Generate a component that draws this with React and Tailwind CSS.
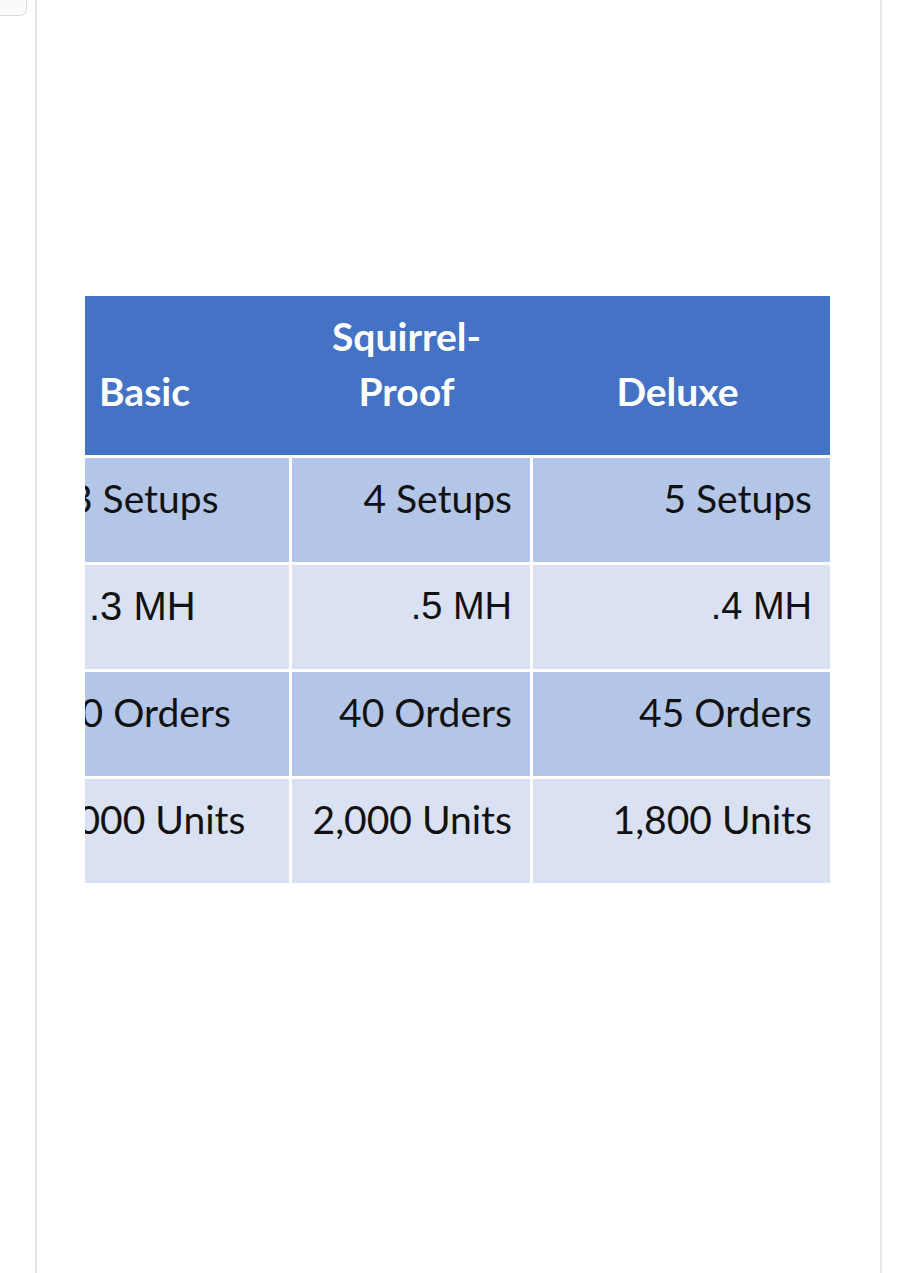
import React from "react";

const lato = { fontFamily: "Lato, 'Open Sans', sans-serif" };
const arial = { fontFamily: "'Liberation Sans', Arial, sans-serif" };

export default function App() {
  const rows = [
    { bg: "bg-[#b4c6e7]", c1: "3 Setups", c1cls: "ml-[-15px]", c2: "4 Setups", c3: "5 Setups", arial: false },
    { bg: "bg-[#d9e1f2]", c1: ".3 MH", c1cls: "ml-[4px] text-[40px]", c2: ".5 MH", c3: ".4 MH", arial: true },
    { bg: "bg-[#b4c6e7]", c1: "30 Orders", c1cls: "ml-[-27px]", c2: "40 Orders", c3: "45 Orders", arial: false },
    { bg: "bg-[#d9e1f2]", c1: "2,000 Units", c1cls: "ml-[-39px]", c2: "2,000 Units", c3: "1,800 Units", arial: false },
  ];
  return (
    <div className="relative h-[1273px] w-[918px] overflow-hidden bg-white">
      <div className="absolute left-0 top-0 h-[16px] w-[27px] rounded-br-[7px] border-b border-r border-[#dcdcdc] bg-[#fafafa]" />
      <div className="ml-[35px] h-full w-[847px] border-x-2 border-[#e6e6e6]">
        <div className="pl-[48px] pt-[296px]">
          <div className="grid w-[745px] grid-cols-[204px_238px_297px] gap-[3px] bg-white text-[39px] text-[#111]" style={lato}>
            <div className="col-span-3 grid h-[159px] grid-cols-[207px_241px_297px] bg-[#4472c4] font-bold text-white">
              <div className="flex items-end pb-[36px] pl-[14px] leading-[55px]">Basic</div>
              <div className="flex flex-col items-center justify-end pb-[36px] pr-[12px] text-center leading-[55px]">
                <span>Squirrel-</span>
                <span>Proof</span>
              </div>
              <div className="flex items-end justify-center pb-[36px] pr-[8px] leading-[55px]">Deluxe</div>
            </div>
            {rows.map((r, i) => (
              <React.Fragment key={i}>
                <div
                  className={`h-[104px] overflow-hidden whitespace-nowrap leading-[1.2] ${r.arial ? "pt-[17px] text-[38px]" : "pt-[17px]"} ${r.bg}`}
                  style={r.arial ? arial : undefined}
                >
                  <div className={r.c1cls}>{r.c1}</div>
                </div>
                <div
                  className={`h-[104px] whitespace-nowrap pr-[18px] text-right leading-[1.2] ${r.arial ? "pt-[19px] text-[38px]" : "pt-[17px]"} ${r.bg}`}
                  style={r.arial ? arial : undefined}
                >
                  {r.c2}
                </div>
                <div
                  className={`h-[104px] whitespace-nowrap pr-[18px] text-right leading-[1.2] ${r.arial ? "pt-[19px] text-[38px]" : "pt-[17px]"} ${r.bg}`}
                  style={r.arial ? arial : undefined}
                >
                  {r.c3}
                </div>
              </React.Fragment>
            ))}
          </div>
        </div>
      </div>
    </div>
  );
}
